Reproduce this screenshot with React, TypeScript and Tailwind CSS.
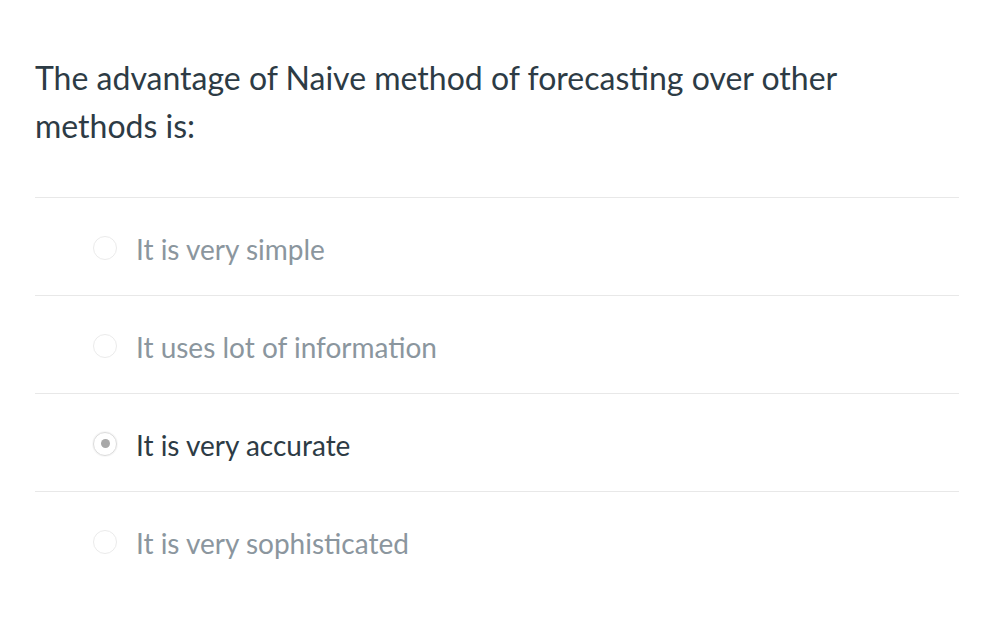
import React from "react";

const options = [
  { label: "It is very simple", selected: false },
  { label: "It uses lot of information", selected: false },
  { label: "It is very accurate", selected: true },
  { label: "It is very sophisticated", selected: false },
];

export default function App() {
  return (
    <div
      className="w-[1000px] h-[624px] bg-white overflow-hidden"
      style={{ fontFamily: "Lato, 'Open Sans', sans-serif" }}
    >
      <div className="px-[35px] pt-[54px]">
        <div className="text-[32px] leading-[48px] text-[#2d3b45] w-[900px]">
          The advantage of Naive method of forecasting over other methods is:
        </div>
        <div className="mt-[47px] w-[924px]">
          {options.map((o, i) => (
            <div
              key={i}
              className="border-t border-[#e8e8e8] pt-[33px] pb-[28px] flex items-center"
            >
              <div
                className={`ml-[58px] w-[24px] h-[24px] -mt-[3px] rounded-full border bg-white flex items-center justify-center ${
                  o.selected
                    ? "border-[#dcdcdc] shadow-[0_0_0_1px_rgba(0,0,0,0.03)]"
                    : "border-[#ebebeb]"
                }`}
              >
                {o.selected && (
                  <div className="w-[9px] h-[9px] rounded-full bg-[#a8a8a8]" />
                )}
              </div>
              <div
                className={`ml-[19px] text-[28px] leading-[36px] ${
                  o.selected ? "text-[#2d3b45]" : "text-[#8b969e]"
                }`}
              >
                {o.label}
              </div>
            </div>
          ))}
        </div>
      </div>
    </div>
  );
}
